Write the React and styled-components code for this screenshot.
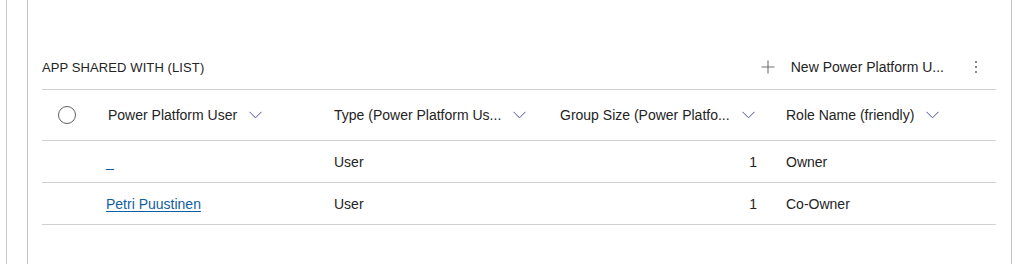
import React from 'react';
import styled, { createGlobalStyle } from 'styled-components';

const GlobalStyle = createGlobalStyle`
    html, body {
        margin: 0;
        padding: 0;
        background: #ffffff;
    }
    body {
        font-family: "Segoe UI", "Liberation Sans", Arial, sans-serif;
        color: #242424;
    }
`;

const Page = styled.div`
    height: 264px;
    padding-left: 6px;
    overflow: hidden;
`;

const Frame = styled.div`
    height: 100%;
    border-left: 1px solid #c8c8c8;
    padding-left: 20px;
    box-sizing: border-box;
`;

const Section = styled.section`
    width: 985px;
    height: 100%;
    box-sizing: border-box;
    border-left: 1px solid #c8c8c8;
    border-right: 1px solid #c8c8c8;
    padding: 45px 15px 0 14px;
`;

const Toolbar = styled.div`
    height: 44px;
    display: flex;
    align-items: center;
    border-bottom: 1px solid #d1d1d1;
`;

const Title = styled.h2`
    margin: 0;
    flex: 1;
    font-size: 13px;
    font-weight: 400;
    letter-spacing: 0.1px;
    color: #242424;
`;

const CommandButton = styled.button`
    display: flex;
    align-items: center;
    gap: 16px;
    background: none;
    border: none;
    padding: 0;
    font: inherit;
    font-size: 14px;
    color: #242424;
    cursor: pointer;
`;

const MoreButton = styled.button`
    width: 32px;
    height: 32px;
    margin-left: 16px;
    margin-right: 4px;
    display: flex;
    align-items: center;
    justify-content: center;
    background: none;
    border: none;
    padding: 0;
`;

const Grid = styled.div`
    display: grid;
    grid-template-columns: 50px repeat(4, 1fr);
`;

const HeaderCell = styled.div`
    height: 50px;
    display: flex;
    align-items: center;
    gap: 12px;
    padding: 0 16px;
    min-width: 0;
    font-size: 14px;
    border-bottom: 1px solid #d1d1d1;
`;

const SelectCell = styled(HeaderCell)`
    padding: 0;
    justify-content: center;
`;

const Radio = styled.span`
    width: 18px;
    height: 18px;
    box-sizing: border-box;
    border: 1px solid #616161;
    border-radius: 50%;
`;

const HeaderText = styled.span`
    white-space: nowrap;
`;

const Cell = styled.div`
    height: 41px;
    display: flex;
    align-items: center;
    justify-content: ${p => (p.$numeric ? 'flex-end' : 'flex-start')};
    padding: ${p => (p.$numeric ? '0 13px 0 16px' : '0 16px')};
    font-size: 14px;
    border-bottom: 1px solid #d1d1d1;
    white-space: nowrap;
`;

const UserLink = styled.a`
    margin-left: -2px;
    color: #115ea3;
    text-decoration: ${p => (p.$plain ? 'none' : 'underline')};
    text-underline-offset: 2px;
`;

function Chevron() {
    return (
        <svg width="13" height="8" viewBox="0 0 13 8" style={{ flex: 'none' }}>
            <path d="M0.5 0.8 L6.5 6.8 L12.5 0.8" fill="none" stroke="#4f52a0" strokeWidth="1" />
        </svg>
    );
}

function PlusIcon() {
    return (
        <svg width="14" height="14" viewBox="0 0 14 14">
            <path d="M7 0.5 V13.5 M0.5 7 H13.5" fill="none" stroke="#707070" strokeWidth="1.1" />
        </svg>
    );
}

function MoreIcon() {
    return (
        <svg width="4" height="14" viewBox="0 0 4 14">
            <circle cx="2" cy="2" r="1" fill="#616161" />
            <circle cx="2" cy="7" r="1" fill="#616161" />
            <circle cx="2" cy="12" r="1" fill="#616161" />
        </svg>
    );
}

const columns = [
    'Power Platform User',
    'Type (Power Platform Us...',
    'Group Size (Power Platfo...',
    'Role Name (friendly)',
];

const rows = [
    { name: '_', plain: true, type: 'User', size: 1, role: 'Owner' },
    { name: 'Petri Puustinen', type: 'User', size: 1, role: 'Co-Owner' },
];

function App() {
    return (
        <Page>
            <GlobalStyle />
            <Frame>
                <Section>
                    <Toolbar>
                        <Title>APP SHARED WITH (LIST)</Title>
                        <CommandButton>
                            <PlusIcon />
                            <span>New Power Platform U...</span>
                        </CommandButton>
                        <MoreButton aria-label="More commands">
                            <MoreIcon />
                        </MoreButton>
                    </Toolbar>
                    <Grid>
                        <SelectCell>
                            <Radio />
                        </SelectCell>
                        {columns.map(col => (
                            <HeaderCell key={col}>
                                <HeaderText>{col}</HeaderText>
                                <Chevron />
                            </HeaderCell>
                        ))}
                        {rows.map(row => (
                            <React.Fragment key={row.name}>
                                <Cell />
                                <Cell>
                                    <UserLink href="#" $plain={row.plain}>{row.name}</UserLink>
                                </Cell>
                                <Cell>{row.type}</Cell>
                                <Cell $numeric>{row.size}</Cell>
                                <Cell>{row.role}</Cell>
                            </React.Fragment>
                        ))}
                    </Grid>
                </Section>
            </Frame>
        </Page>
    );
}

export default App;
